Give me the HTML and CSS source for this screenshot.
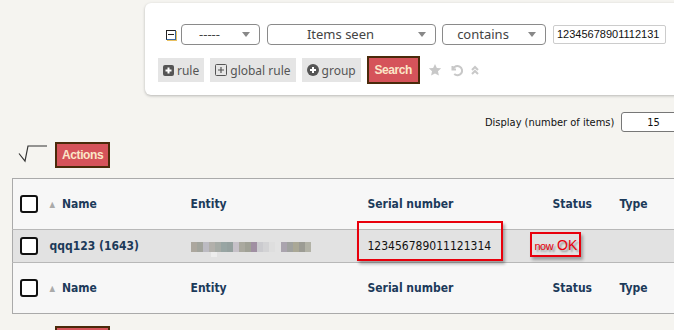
FILE: index.html
```html
<!DOCTYPE html>
<html lang="en">
<head>
    <meta charset="UTF-8">
    <title>Items list</title>
    <link rel="stylesheet" href="styles.css">
</head>
<body>
    <div class="search-panel">
        <div class="criteria-row">
            <span class="toggle-icon"></span>
            <div class="select select-small">-----<span class="caret"></span></div>
            <div class="select select-wide">Items seen<span class="caret"></span></div>
            <div class="select select-mid">contains<span class="caret"></span></div>
            <div class="text-input">12345678901112131</div>
        </div>
        <div class="buttons-row">
            <span class="gray-btn">
                <svg width="11" height="11" viewBox="0 0 11 11"><rect width="11" height="11" rx="2" fill="#555"/><path d="M5.5 2.5v6M2.5 5.5h6" stroke="#fff" stroke-width="2"/></svg>rule
            </span>
            <span class="gray-btn">
                <svg width="12" height="12" viewBox="0 0 12 12"><rect x="0.5" y="0.5" width="11" height="11" rx="1" fill="none" stroke="#555"/><path d="M6 3v6M3 6h6" stroke="#555" stroke-width="1.2"/></svg>global rule
            </span>
            <span class="gray-btn">
                <svg width="12" height="12" viewBox="0 0 12 12"><circle cx="6" cy="6" r="6" fill="#555"/><path d="M6 3v6M3 6h6" stroke="#fff" stroke-width="2"/></svg>group
            </span>
            <span class="red-btn search-btn">Search</span>
            <svg class="tool-icon" width="14" height="14" viewBox="0 0 24 24"><path d="M12 1.5l3.2 6.9 7.4.8-5.5 5 1.6 7.3L12 17.8l-6.7 3.7 1.6-7.3-5.5-5 7.4-.8z" fill="#c8c8c8"/></svg>
            <svg class="tool-icon" width="14" height="14" viewBox="0 0 24 24"><path d="M6 5v6h6" fill="none" stroke="#c8c8c8" stroke-width="3.5"/><path d="M7 10a8 8 0 1 1 2 9" fill="none" stroke="#c8c8c8" stroke-width="3.5"/></svg>
            <svg class="tool-icon" width="10" height="12" viewBox="0 0 10 12"><path d="M2 6l3-3 3 3M2 10l3-3 3 3" fill="none" stroke="#c8c8c8" stroke-width="2"/></svg>
        </div>
    </div>

    <div class="display-row">
        <span class="display-label">Display (number of items)</span>
        <div class="display-input">15</div>
    </div>

    <div class="actions-row">
        <svg class="arrow-icon" width="30" height="20" viewBox="0 0 30 20"><path d="M2 8.5l6 7.5 3-15h19" fill="none" stroke="#333" stroke-width="1.2"/></svg>
        <span class="red-btn">Actions</span>
    </div>

    <table class="items-table">
        <colgroup>
            <col style="width:37px"><col style="width:141px"><col style="width:177px">
            <col style="width:162px"><col style="width:90px"><col style="width:51px"><col>
        </colgroup>
        <tr class="head-row">
            <th><span class="checkbox"></span></th>
            <th><span class="sort">&#9650;</span>Name</th>
            <th>Entity</th>
            <th>Serial number</th>
            <th class="status-head">Status</th>
            <th>Type</th>
            <th></th>
        </tr>
        <tr class="data-row">
            <td><span class="checkbox"></span></td>
            <td class="item-name">qqq123 (1643)</td>
            <td>
                <span class="blurred">
                    <i style="background:#aca79e"></i><i style="background:#a2a49c"></i><i style="background:#bcbbc2"></i><i style="background:#b2b0ab"></i><i style="background:#a6aba6"></i><i style="background:#98a5a3"></i><i style="background:#95a19f"></i><i style="background:#c6c1c8"></i><i style="background:#aaa99f"></i><i style="background:#a0a196"></i><i style="background:#a08fa2"></i><i style="background:#cbcbcf"></i><i style="background:#d3d3d5"></i><i style="background:#dedede"></i>
                    <b></b>
                    <i style="background:#aaa4ae"></i><i style="background:#a0a29f"></i><i style="background:#aaa896"></i><i style="background:#9c9c94"></i><i style="background:#b2b2a6"></i>
                    <em></em>
                </span>
            </td>
            <td class="serial"><span class="serial-wrap">123456789011121314<span class="mark-serial"></span></span></td>
            <td><span class="status"><span class="now">now</span> OK</span></td>
            <td></td>
            <td></td>
        </tr>
        <tr class="head-row">
            <th><span class="checkbox"></span></th>
            <th><span class="sort">&#9650;</span>Name</th>
            <th>Entity</th>
            <th>Serial number</th>
            <th class="status-head">Status</th>
            <th>Type</th>
            <th></th>
        </tr>
    </table>

    <div class="actions-row bottom">
        <span class="red-btn">Actions</span>
    </div>
</body>
</html>
```

FILE: styles.css
```css
html, body {
    overflow: hidden;
}

body {
    margin: 0;
    width: 674px;
    height: 330px;
    background-color: #f5f4f0;
    font-family: 'DejaVu Sans Condensed', 'DejaVu Sans', sans-serif;
    color: #222;
}

.search-panel {
    margin: 3px 0 0 145px;
    width: 560px;
    height: 92px;
    box-sizing: border-box;
    padding: 21px 0 0 13px;
    background-color: #fff;
    border-radius: 6px;
    box-shadow: 0 1px 3px rgba(0, 0, 0, 0.25);
    font-family: 'Noto Sans', sans-serif;
    font-size: 13px;
}

.criteria-row {
    display: flex;
    align-items: center;
    height: 21px;
    padding-left: 8px;
}

.toggle-icon {
    position: relative;
    width: 8px;
    height: 8px;
    margin-right: 5px;
    border: 1px solid #222;
    border-right-color: #3a6aa0;
    border-bottom-color: #3a6aa0;
    box-shadow: 1px 1px 0 #e8c060;
}

.toggle-icon::after {
    content: '';
    position: absolute;
    left: 1px;
    top: 3px;
    width: 6px;
    height: 1px;
    background: #222;
}

.select {
    position: relative;
    height: 21px;
    box-sizing: border-box;
    border: 1px solid #8a8a8a;
    border-radius: 4px;
    color: #444;
    line-height: 19px;
    padding-right: 22px;
    text-align: center;
    margin-right: 7px;
}

.caret {
    position: absolute;
    right: 9px;
    top: 7px;
    border-left: 4px solid transparent;
    border-right: 4px solid transparent;
    border-top: 5px solid #888;
}

.select-small {
    width: 79px;
}

.select-wide {
    width: 169px;
    margin-right: 6px;
}

.select-mid {
    width: 104px;
}

.text-input {
    width: 113px;
    height: 19px;
    box-sizing: border-box;
    border: 1px solid #ccc;
    border-radius: 2px;
    padding-left: 3px;
    font-family: 'Liberation Sans', Arial, sans-serif;
    font-size: 11px;
    line-height: 17px;
    color: #111;
    overflow: hidden;
    white-space: nowrap;
}

.buttons-row {
    display: flex;
    align-items: center;
    margin-top: 11px;
}

.gray-btn {
    display: inline-flex;
    align-items: center;
    gap: 3px;
    height: 24px;
    padding: 0 5px;
    margin-right: 6px;
    background-color: #e5e5e5;
    color: #555;
    font-size: 12px;
}

.red-btn {
    display: inline-block;
    box-sizing: border-box;
    height: 26px;
    padding: 0 5px;
    background-color: #d5535a;
    border: 2px solid #4a2a0a;
    color: #fbe6c8;
    font-family: 'Liberation Sans', Arial, sans-serif;
    font-weight: bold;
    font-size: 12px;
    letter-spacing: -0.4px;
    line-height: 22px;
}

.search-btn {
    width: 53px;
    height: 28px;
    line-height: 24px;
    margin-right: 8px;
    text-align: center;
}

.tool-icon {
    margin-right: 7px;
}

.display-row {
    display: flex;
    align-items: center;
    margin: 17px 0 0 485px;
    height: 20px;
    font-size: 11px;
    color: #111;
    white-space: nowrap;
}

.display-input {
    margin-left: 7px;
    flex: none;
    width: 70px;
    height: 20px;
    box-sizing: border-box;
    border: 1px solid #777;
    border-radius: 3px;
    background: #fff;
    padding-left: 25px;
    line-height: 19px;
    font-size: 11px;
}

.actions-row {
    display: flex;
    align-items: center;
    margin: 10px 0 0 17px;
    height: 26px;
}

.arrow-icon {
    margin-right: 8px;
}

.actions-row.bottom {
    margin: 12px 0 0 55px;
}

.items-table {
    margin: 10px 0 0 12px;
    width: 720px;
    table-layout: fixed;
    border-collapse: collapse;
    border: 1px solid #aaa;
    background-color: #f7f7f7;
}

.items-table th,
.items-table td {
    padding: 0;
    text-align: left;
    white-space: nowrap;
}

.items-table th {
    height: 50px;
    color: #1c3a5a;
    font-size: 12px;
    font-weight: bold;
}

.items-table th.status-head {
    padding-left: 23px;
}

.data-row td {
    height: 32px;
    background-color: #e2e2e2;
    border-top: 1px solid #b8b8b8;
    border-bottom: 1px solid #b8b8b8;
    font-size: 12px;
}

.checkbox {
    display: block;
    margin-left: 7px;
    width: 14px;
    height: 14px;
    border: 2px solid #111;
    border-radius: 3px;
    background-color: #fff;
}

.sort {
    font-size: 8px;
    color: #aaa;
    margin-right: 7px;
    vertical-align: 1px;
}

.item-name {
    color: #1c3a5a;
    font-weight: bold;
}

.blurred {
    position: relative;
    display: inline-flex;
    height: 10px;
    vertical-align: middle;
}

.blurred i {
    width: 6px;
    height: 10px;
}

.blurred b {
    width: 6px;
}

.blurred em {
    position: absolute;
    left: 20px;
    top: 10px;
    width: 6px;
    height: 5px;
    background: #ededed;
}

.serial {
    color: #111;
}

.serial-wrap {
    position: relative;
}

.mark-serial {
    position: absolute;
    left: -11px;
    top: -18px;
    width: 142px;
    height: 36px;
    border: 2px solid #e8000c;
    box-shadow: 2px 3px 3px rgba(0, 0, 0, 0.3);
}

.status {
    display: inline-block;
    margin-bottom: 4px;
    padding: 3px 2px 2px 3px;
    border: 2px solid #e8000c;
    box-shadow: 2px 3px 3px rgba(0, 0, 0, 0.3);
    color: #e8000c;
    font-family: 'Liberation Sans', Arial, sans-serif;
    font-size: 14px;
    text-shadow: 2px 2px 2px rgba(0, 0, 0, 0.35);
}

.now {
    font-size: 11px;
    letter-spacing: -0.5px;
}
```
